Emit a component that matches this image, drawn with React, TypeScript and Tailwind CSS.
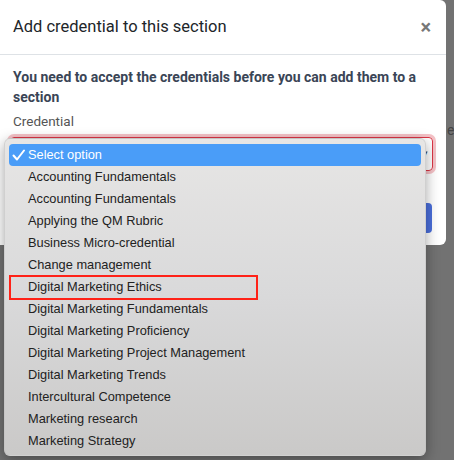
const options = [
  "Accounting Fundamentals",
  "Accounting Fundamentals",
  "Applying the QM Rubric",
  "Business Micro-credential",
  "Change management",
  "Digital Marketing Ethics",
  "Digital Marketing Fundamentals",
  "Digital Marketing Proficiency",
  "Digital Marketing Project Management",
  "Digital Marketing Trends",
  "Intercultural Competence",
  "Marketing research",
  "Marketing Strategy",
];

export default function App() {
  return (
    <div className="relative w-[454px] h-[460px] overflow-hidden bg-[#727272] font-['Roboto','Liberation_Sans',Arial,sans-serif]">
      <div className="flex">
        {/* Modal */}
        <div className="w-[448px] h-[245px] bg-white rounded-tr-md rounded-br-md flex flex-col">
          <div className="h-[55px] flex items-center justify-between pl-[13px] pr-[15px] border-b border-[#dee2e6]">
            <h1 className="text-[16.5px] text-[#212529]">Add credential to this section</h1>
            <span className="text-[20px] font-bold text-[#777] leading-none">×</span>
          </div>
          <div className="px-[13px] pt-[12px]">
            <p className="text-[14px] leading-[20px] font-bold text-[#3a4556]">
              You need to accept the credentials before you can add them to a section
            </p>
            <div className="mt-[4px] text-[13.5px] leading-[20px] text-[#555]">Credential</div>
            <div className="mt-[6px] ml-[-3px] w-[423px] h-[34px] rounded border border-[#dc3545] ring-[3px] ring-[#f5c2c7] flex items-center justify-end pr-[4px]">
              <span className="text-[9px] text-[#444]">▾</span>
            </div>
          </div>
          <div className="mt-auto flex justify-end pr-[14px] pb-[12px]">
            <div className="w-[90px] h-[30px] rounded bg-[#4b6fdc]" />
          </div>
        </div>
        <div className="pt-[120px] pl-[1px] text-[14px] text-[#444]">e</div>
      </div>

      {/* Native select popup */}
      <div className="absolute left-[4px] top-[138px] w-[422px] h-[318px] rounded-[6px] bg-gradient-to-b from-[#e7e6e5] via-[#d9d9da] to-[#cac9c8] shadow-[0_4px_14px_rgba(0,0,0,0.35)] border border-[#bdbdbd]/50 pt-[5px] pb-[4px] px-[4px] font-['Liberation_Sans',Arial,sans-serif] text-[12.8px] text-[#222]">
        <div className="h-[22px] rounded-[4px] bg-[#4a9df8] text-white flex items-center pl-[3px]">
          <svg width="16" height="14" viewBox="0 0 16 14" className="ml-[-1px]">
            <path d="M2.5 7.5 L6 11.5 L13 2.5" fill="none" stroke="white" strokeWidth="2" strokeLinecap="round" strokeLinejoin="round" />
          </svg>
          <span className="ml-[1px]">Select option</span>
        </div>
        {options.map((o, i) => (
          <div key={i} className="relative h-[22px] flex items-center pl-[19px]">
            {o}
            {o === "Digital Marketing Ethics" && (
              <div className="absolute left-[0px] top-[-1px] w-[249px] h-[25px] border-[2.5px] border-[#ff2218]" />
            )}
          </div>
        ))}
      </div>
    </div>
  );
}
